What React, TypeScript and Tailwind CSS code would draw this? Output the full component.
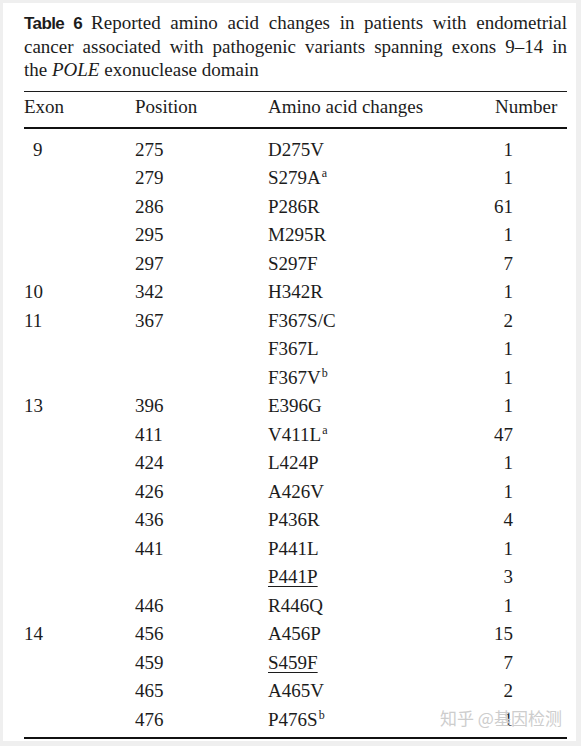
import React from "react";

type Row = { exon: string; pos: string; aa: React.ReactNode; num: string };

const sup = (s: string) => (
  <sup className="text-[12px] top-[-0.6em] ml-[1px]">{s}</sup>
);

const rows: Row[] = [
  { exon: "9", pos: "275", aa: "D275V", num: "1" },
  { exon: "", pos: "279", aa: <>S279A{sup("a")}</>, num: "1" },
  { exon: "", pos: "286", aa: "P286R", num: "61" },
  { exon: "", pos: "295", aa: "M295R", num: "1" },
  { exon: "", pos: "297", aa: "S297F", num: "7" },
  { exon: "10", pos: "342", aa: "H342R", num: "1" },
  { exon: "11", pos: "367", aa: "F367S/C", num: "2" },
  { exon: "", pos: "", aa: "F367L", num: "1" },
  { exon: "", pos: "", aa: <>F367V{sup("b")}</>, num: "1" },
  { exon: "13", pos: "396", aa: "E396G", num: "1" },
  { exon: "", pos: "411", aa: <>V411L{sup("a")}</>, num: "47" },
  { exon: "", pos: "424", aa: "L424P", num: "1" },
  { exon: "", pos: "426", aa: "A426V", num: "1" },
  { exon: "", pos: "436", aa: "P436R", num: "4" },
  { exon: "", pos: "441", aa: "P441L", num: "1" },
  {
    exon: "",
    pos: "",
    aa: <span className="underline underline-offset-[3px] decoration-1">P441P</span>,
    num: "3",
  },
  { exon: "", pos: "446", aa: "R446Q", num: "1" },
  { exon: "14", pos: "456", aa: "A456P", num: "15" },
  {
    exon: "",
    pos: "459",
    aa: <span className="underline underline-offset-[3px] decoration-1">S459F</span>,
    num: "7",
  },
  { exon: "", pos: "465", aa: "A465V", num: "2" },
  { exon: "", pos: "476", aa: <>P476S{sup("b")}</>, num: "1" },
];

const serif = "font-['Liberation_Serif','Times_New_Roman',serif]";

export default function App() {
  return (
    <div className="w-[581px] h-[746px] bg-[#efefef] pt-[3px] pl-[3px] pr-[5px] pb-[5px]">
      <div className={`relative bg-white h-full pl-[21px] pr-[9px] pt-[8px] text-[#1c1c1c] ${serif}`}>
        {/* Caption */}
        <div className="text-[19px] leading-[23px]">
          <div className="text-justify [text-align-last:justify]">
            <span className="font-['Liberation_Sans','Arial',sans-serif] font-bold text-[17px] tracking-[-0.6px] mr-[9px]">
              Table 6
            </span>
            Reported amino acid changes in patients with endometrial
          </div>
          <div className="text-justify [text-align-last:justify]">
            cancer associated with pathogenic variants spanning exons 9–14 in
          </div>
          <div>
            the <i>POLE</i> exonuclease domain
          </div>
        </div>

        {/* Table */}
        <div className="mt-[10px] border-t border-[#1c1c1c]">
          <div className="grid grid-cols-[111px_133px_227px_1fr] h-[37px] items-center text-[19px] border-b-[2px] border-[#111] pb-[5px]">
            <div>Exon</div>
            <div>Position</div>
            <div>Amino acid changes</div>
            <div>Number</div>
          </div>
          <div className="pt-[6px] pb-[3px] border-b-[2px] border-[#111]">
            {rows.map((r, i) => (
              <div
                key={i}
                className="grid grid-cols-[111px_133px_227px_1fr] h-[28.5px] items-center text-[19px] leading-none"
              >
                <div className={r.exon === "9" ? "pl-[9px]" : ""}>{r.exon}</div>
                <div>{r.pos}</div>
                <div className="whitespace-nowrap">{r.aa}</div>
                <div className="w-[18px] text-right whitespace-nowrap flex justify-end">
                  {r.num}
                </div>
              </div>
            ))}
          </div>
        </div>

        {/* Watermark */}
        <div className="absolute left-[437px] top-[706px] whitespace-nowrap text-[17px] leading-none text-[#cdcdcd] font-['Noto_Sans_CJK_SC',sans-serif] [text-shadow:0_0_2px_#fff]">
          知乎 @基因检测
        </div>
      </div>
    </div>
  );
}
